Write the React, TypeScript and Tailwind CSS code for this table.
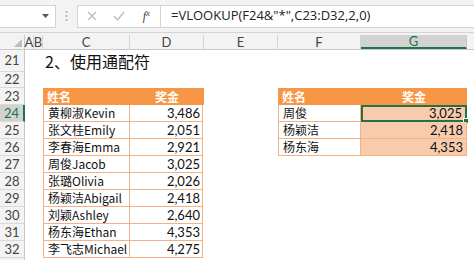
import React from "react";

const left = [
  ["黄柳淑Kevin", "3,486"],
  ["张文桂Emily", "2,051"],
  ["李春海Emma", "2,921"],
  ["周俊Jacob", "3,025"],
  ["张璐Olivia", "2,026"],
  ["杨颖洁Abigail", "2,418"],
  ["刘颖Ashley", "2,640"],
  ["杨东海Ethan", "4,353"],
  ["李飞志Michael", "4,275"],
];
const right = [
  ["周俊", "3,025"],
  ["杨颖洁", "2,418"],
  ["杨东海", "4,353"],
];

const cjk = "font-['Noto_Sans_CJK_SC','Noto_Sans',sans-serif]";
const num = "font-['Lato','Noto_Sans',sans-serif]";

function RowHead({ n, sel, h }: { n?: number; sel?: boolean; h: string }) {
  return (
    <div
      className={`${h} w-[25px] shrink-0 flex items-center justify-center text-[13px] leading-none border-b border-[#d9d9d9] ${num} ${
        sel
          ? "bg-[#d2d2d2] text-[#217346] border-r-2 border-r-[#217346]"
          : "bg-[#f3f3f3] text-[#444] border-r border-r-[#c8c8c8]"
      }`}
    >
      {n}
    </div>
  );
}

function Row({ n, h, sel, children }: { n?: number; h: string; sel?: boolean; children?: React.ReactNode }) {
  return (
    <div className={`flex ${h}`}>
      <RowHead n={n} sel={sel} h={h} />
      <div className="w-[18px] shrink-0" />
      {children}
    </div>
  );
}

export default function App() {
  return (
    <div className={`w-[474px] h-[260px] overflow-hidden bg-white ${cjk}`}>
      {/* formula bar */}
      <div className="h-[33px] bg-[#f3f3f3] flex items-center border-b border-[#d4d4d4]">
        <div className="w-[56px] h-[23px] bg-white border border-[#d4d4d4] border-l-0 flex items-center justify-end pr-[6px]">
          <svg width="7" height="4" viewBox="0 0 7 4"><path d="M0 0h7L3.5 4z" fill="#555" /></svg>
        </div>
        <div className="w-[21px] flex justify-center">
          <svg width="3" height="12" viewBox="0 0 3 12">
            <circle cx="1.5" cy="2" r="1" fill="#aaa" />
            <circle cx="1.5" cy="6" r="1" fill="#aaa" />
            <circle cx="1.5" cy="10" r="1" fill="#aaa" />
          </svg>
        </div>
        <div className="w-[84px] h-[23px] bg-white border border-[#d4d4d4] flex items-center">
          <div className="w-[28px] flex justify-center">
            <svg width="10" height="10" viewBox="0 0 10 10"><path d="M1 1l8 8M9 1l-8 8" stroke="#bbb" strokeWidth="1.2" /></svg>
          </div>
          <div className="w-[28px] flex justify-center">
            <svg width="12" height="10" viewBox="0 0 12 10"><path d="M1 5l3.5 4L11 1" stroke="#bbb" strokeWidth="1.2" fill="none" /></svg>
          </div>
          <div className="w-[28px] flex justify-center text-[#444] text-[12px] italic font-['Liberation_Serif',serif]">
            f<span className="text-[9px]">x</span>
          </div>
        </div>
        <div className="flex-1 h-[23px] bg-white border border-[#d4d4d4] border-x-0 flex items-center pl-[10px] text-[13px] text-[#222] font-['Open_Sans','Noto_Sans',sans-serif]">
          =VLOOKUP(F24&amp;"*",C23:D32,2,0)
        </div>
      </div>
      <div className="h-[2px] bg-[#f3f3f3]" />
      {/* column header */}
      <div className={`flex h-[15px] bg-[#f3f3f3] text-[13px] text-[#444] leading-none border-b border-[#c8c8c8] ${num}`}>
        <div className="w-[25px] shrink-0 flex items-end justify-end pr-[2px] pb-[2px] border-r border-[#c8c8c8]">
          <svg width="8" height="8" viewBox="0 0 8 8"><path d="M8 0v8H0z" fill="#bdbdbd" /></svg>
        </div>
        <div className="w-[9px] shrink-0 flex items-center justify-center border-r border-[#d4d4d4]">A</div>
        <div className="w-[9px] shrink-0 flex items-center justify-center border-r border-[#d4d4d4]">B</div>
        <div className="w-[87px] shrink-0 flex items-center justify-center border-r border-[#d4d4d4]">C</div>
        <div className="w-[74px] shrink-0 flex items-center justify-center border-r border-[#d4d4d4]">D</div>
        <div className="w-[74px] shrink-0 flex items-center justify-center border-r border-[#d4d4d4]">E</div>
        <div className="w-[83px] shrink-0 flex items-center justify-center border-r border-[#d4d4d4]">F</div>
        <div className="w-[106px] shrink-0 flex items-center justify-center bg-[#d2d2d2] text-[#217346] border-b-2 border-[#217346] border-r border-r-[#c8c8c8]">
          G
        </div>
        <div className="flex-1" />
      </div>
      {/* rows */}
      <Row n={21} h="h-[22px]">
        <div className="flex items-center pl-[2px] text-[16px] leading-none text-[#111]">2、使用通配符</div>
      </Row>
      <Row n={22} h="h-[16px]" />
      <Row n={23} h="h-[17px]">
        <div className="w-[87px] shrink-0 bg-[#f79646] text-white font-bold text-[12px] leading-none flex items-center pl-[4px]">姓名</div>
        <div className="w-[74px] shrink-0 bg-[#f79646] text-white font-bold text-[12px] leading-none flex items-center justify-center">奖金</div>
        <div className="w-[74px] shrink-0" />
        <div className="w-[83px] shrink-0 bg-[#f79646] text-white font-bold text-[12px] leading-none flex items-center pl-[4px]">姓名</div>
        <div className="w-[106px] shrink-0 bg-[#f79646] text-white font-bold text-[12px] leading-none flex items-center justify-center">奖金</div>
      </Row>
      {left.map(([name, val], i) => {
        const r = right[i];
        return (
          <Row key={i} n={24 + i} h="h-[17px]" sel={i === 0}>
            <div className="w-[87px] shrink-0 border-x border-b border-[#f4b183] text-[12px] leading-none text-[#111] flex items-center pl-[4px] whitespace-nowrap">
              {name}
            </div>
            <div className={`w-[73px] shrink-0 border-r border-b border-[#f4b183] text-[13px] leading-none text-[#111] flex items-center justify-end pr-[2px] ${num}`}>
              {val}
            </div>
            <div className="w-[75px] shrink-0" />
            {r ? (
              <>
                <div className="w-[83px] shrink-0 border-x border-b border-[#f4b183] text-[12px] leading-none text-[#111] flex items-center pl-[4px]">
                  {r[0]}
                </div>
                <div
                  className={`w-[106px] shrink-0 relative bg-[#f8cbad] text-[13px] leading-none text-[#111] flex items-center justify-end pr-[3px] ${num} ${
                    i === 0 ? "border-2 border-[#217346]" : "border-r border-b border-[#f4b183]"
                  }`}
                >
                  {r[1]}
                  {i === 0 && (
                    <div className="absolute right-[-4px] bottom-[-4px] w-[6px] h-[6px] bg-[#217346] border border-white" />
                  )}
                </div>
              </>
            ) : null}
          </Row>
        );
      })}
      <Row h="h-[17px]" />
    </div>
  );
}
